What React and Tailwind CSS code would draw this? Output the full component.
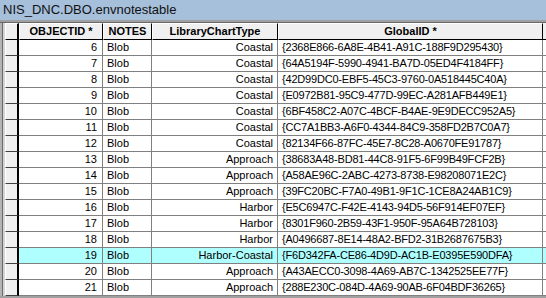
import React from 'react'

const rows = [
    [6, 'Blob', 'Coastal', '{2368E866-6A8E-4B41-A91C-188F9D295430}'],
    [7, 'Blob', 'Coastal', '{64A5194F-5990-4941-BA7D-05ED4F4184FF}'],
    [8, 'Blob', 'Coastal', '{42D99DC0-EBF5-45C3-9760-0A518445C40A}'],
    [9, 'Blob', 'Coastal', '{E0972B81-95C9-477D-99EC-A281AFB449E1}'],
    [10, 'Blob', 'Coastal', '{6BF458C2-A07C-4BCF-B4AE-9E9DECC952A5}'],
    [11, 'Blob', 'Coastal', '{CC7A1BB3-A6F0-4344-84C9-358FD2B7C0A7}'],
    [12, 'Blob', 'Coastal', '{82134F66-87FC-45E7-8C28-A0670FE91787}'],
    [13, 'Blob', 'Approach', '{38683A48-BD81-44C8-91F5-6F99B49FCF2B}'],
    [14, 'Blob', 'Approach', '{A58AE96C-2ABC-4273-8738-E98208071E2C}'],
    [15, 'Blob', 'Approach', '{39FC20BC-F7A0-49B1-9F1C-1CE8A24AB1C9}'],
    [16, 'Blob', 'Harbor', '{E5C6947C-F42E-4143-94D5-56F914EF07EF}'],
    [17, 'Blob', 'Harbor', '{8301F960-2B59-43F1-950F-95A64B728103}'],
    [18, 'Blob', 'Harbor', '{A0496687-8E14-48A2-BFD2-31B2687675B3}'],
    [19, 'Blob', 'Harbor-Coastal', '{F6D342FA-CE86-4D9D-AC1B-E0395E590DFA}'],
    [20, 'Blob', 'Approach', '{A43AECC0-3098-4A69-AB7C-1342525EE77F}'],
    [21, 'Blob', 'Approach', '{288E230C-084D-4A69-90AB-6F04BDF36265}'],
]

function HeaderCell({ w, children }) {
    return (
        <div className={`${w} h-full flex items-center justify-center bg-[#f0f0f0] border-t border-l border-t-white border-l-white border-r border-b border-r-black border-b-black font-bold`}>
            {children}
        </div>
    )
}

export default function App() {
    return (
        <div className="w-[546px] h-[298px] overflow-hidden bg-[#a0a0a0] font-['Liberation_Sans',Arial,sans-serif] text-black">
            <div className="h-[20px] bg-[#a6bfdb] pl-[3px] flex items-center text-[13px] text-[#111]">
                NIS_DNC.DBO.envnotestable
            </div>
            <div className="h-[3px] bg-[#a0a0a0] border-b border-[#696969]" />
            <div className="flex">
                <div className="w-[5px] shrink-0 flex">
                    <div className="w-[2px] bg-[#b4b4b4]" />
                    <div className="w-[1px] bg-[#696969]" />
                    <div className="w-[2px] bg-[#d4d4d4]" />
                </div>
                <div className="flex-1 bg-white">
                    <div className="flex h-[17px] text-[11px] bg-[#f0f0f0]">
                        <div className="w-[14px] h-full bg-[#f0f0f0] border-t border-l border-white border-r-2 border-r-black border-b border-b-black" />
                        <HeaderCell w="w-[84px]">OBJECTID *</HeaderCell>
                        <HeaderCell w="w-[49px]">NOTES</HeaderCell>
                        <HeaderCell w="w-[126px]">LibraryChartType</HeaderCell>
                        <HeaderCell w="w-[265px]">GlobalID *</HeaderCell>
                        <div className="flex-1 border-b border-black" />
                    </div>
                    {rows.map((r) => {
                        const hl = r[0] === 19
                        return (
                            <div key={r[0]} className={`flex h-[16px] text-[11px] ${hl ? 'bg-[#b0ffff]' : 'bg-white'}`}>
                                <div className="w-[14px] h-full bg-[#f0f0f0] border-l border-white border-r-2 border-r-black border-b border-b-[#404040]" />
                                <div className="w-[84px] h-full flex items-center justify-end pr-[5px] border-r border-b border-[#808080]">{r[0]}</div>
                                <div className="w-[49px] h-full flex items-center pl-[4px] border-r border-b border-[#808080]">{r[1]}</div>
                                <div className="w-[126px] h-full flex items-center justify-end pr-[4px] border-r border-b border-[#808080]">{r[2]}</div>
                                <div className="w-[265px] h-full flex items-center pl-[4px] border-r border-b border-[#808080] whitespace-nowrap tracking-[-0.2px]">{r[3]}</div>
                                <div className="flex-1 border-b border-[#808080]" />
                            </div>
                        )
                    })}
                </div>
            </div>
        </div>
    )
}
